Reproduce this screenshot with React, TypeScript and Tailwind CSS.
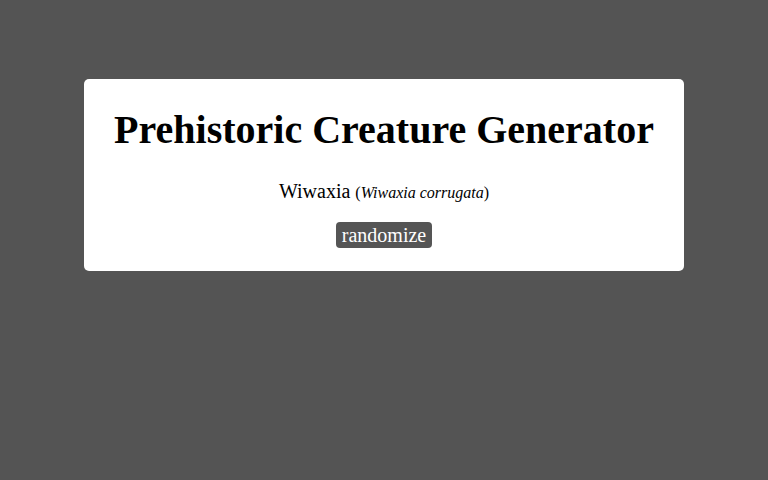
import React, { useState } from 'react';

const creatures = [
  { name: 'Wiwaxia', species: 'Wiwaxia corrugata' },
  { name: 'Anomalocaris', species: 'Anomalocaris canadensis' },
  { name: 'Opabinia', species: 'Opabinia regalis' },
  { name: 'Hallucigenia', species: 'Hallucigenia sparsa' },
];

export default function App() {
  const [index, setIndex] = useState(0);
  const creature = creatures[index];

  const randomize = () => {
    setIndex(Math.floor(Math.random() * creatures.length));
  };

  return (
    <div className="min-h-screen bg-[#545454] pt-[79px] font-['Liberation_Serif',serif]">
      <div className="mx-auto w-[600px] rounded-[5px] bg-white px-5 pt-[28px] pb-[22px] text-center text-black">
        <h1 className="text-[40px] font-bold leading-[46px]">Prehistoric Creature Generator</h1>

        {/* Common name with scientific name */}
        <p className="mt-[27px] text-[20px] leading-[23px]">
          {creature.name}{' '}
          <span className="text-[16px]">
            (<i>{creature.species}</i>)
          </span>
        </p>

        <button
          onClick={randomize}
          className="mt-[18px] rounded-[4px] bg-[#555555] px-[6px] py-[1px] text-[20px] leading-[24px] text-white"
        >
          randomize
        </button>
      </div>
    </div>
  );
}
